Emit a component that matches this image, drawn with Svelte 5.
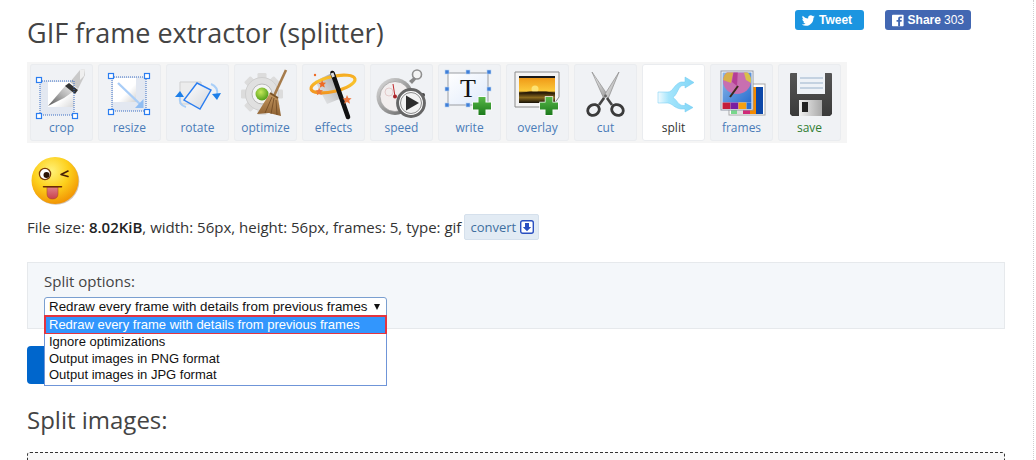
<script>
  const tools = [
    { id: 'crop' }, { id: 'resize' }, { id: 'rotate' }, { id: 'optimize' },
    { id: 'effects' }, { id: 'speed' }, { id: 'write' }, { id: 'overlay' },
    { id: 'cut' }, { id: 'split', cls: 'active' }, { id: 'frames' }, { id: 'save', cls: 'green' }
  ];
  const options = [
    'Redraw every frame with details from previous frames',
    'Ignore optimizations',
    'Output images in PNG format',
    'Output images in JPG format'
  ];
  const gearTeeth = [0, 45, 90, 135, 180, 225, 270, 315];
</script>

{#snippet handle(x, y)}
  <rect x={x - 2.5} y={y - 2.5} width="5" height="5" fill="#fff" stroke="#2a7df0" stroke-width="1.2" />
{/snippet}

{#snippet solidHandle(x, y)}
  <rect x={x - 2} y={y - 2} width="4" height="4" fill="#3f7fd8" stroke="#bcd4f2" stroke-width=".6" />
{/snippet}

{#snippet plus(x, y)}
  <path d="M{x - 3.5} {y - 9}h7v5.5h5.500v7h-5.500v5.500h-7v-5.500h-5.500v-7h5.500z" fill="url(#plusg)" stroke="#fff" stroke-width="1.4" paint-order="stroke" />
  <defs>
    <linearGradient id="plusg" x1="0" y1="0" x2="0" y2="1">
      <stop offset="0" stop-color="#58b848" /><stop offset="1" stop-color="#1c7a1c" />
    </linearGradient>
  </defs>
{/snippet}

{#snippet icon(id)}
  <svg class="ico" viewBox="0 0 64 50" width="64" height="50" aria-hidden="true">
    {#if id === 'crop'}
      <defs>
        <linearGradient id="paper1" x1="0" y1="0" x2="1" y2="1">
          <stop offset="0" stop-color="#fff" /><stop offset=".6" stop-color="#fff" /><stop offset="1" stop-color="#d8d8d8" />
        </linearGradient>
        <linearGradient id="blade" x1="0" y1="1" x2="1" y2="0">
          <stop offset="0" stop-color="#555" /><stop offset=".55" stop-color="#b5b5b5" /><stop offset="1" stop-color="#eee" />
        </linearGradient>
      </defs>
      <rect x="10" y="17" width="34" height="34" fill="#e3e8f1" />
      <rect x="18" y="18" width="26" height="25" fill="url(#paper1)" />
      <path d="M18 42L36 21L44 27L34 34Z" fill="url(#blade)" />
      <path d="M35 22L39 19L48 26L45 30Z" fill="#333" />
      <path d="M40 18L50 6L55 5L55 11L48 25Z" fill="#c9c9c9" />
      <path d="M50 6L55 5L54 12L50 16Z" fill="#efefef" />
      <rect x="10" y="17" width="34" height="34" fill="none" stroke="#3b6fc4" stroke-width="1" stroke-dasharray="1 1" />
      {@render handle(9, 16)}{@render handle(9, 52)}{@render handle(45, 52)}
    {:else if id === 'resize'}
      <defs>
        <linearGradient id="paper2" x1="0" y1="0" x2="1" y2="1">
          <stop offset="0" stop-color="#fff" /><stop offset=".6" stop-color="#fff" /><stop offset="1" stop-color="#d5d5d5" />
        </linearGradient>
      </defs>
      <rect x="14" y="13" width="34" height="34" fill="#e3e8f1" />
      <rect x="15" y="14" width="23" height="24" fill="url(#paper2)" />
      <path d="M20 19L44 42" stroke="#a9cdf7" stroke-width="2.4" />
      <path d="M45.500 35L45.500 44L37 44Z" fill="#8fbdf3" />
      <rect x="14" y="13" width="34" height="34" fill="none" stroke="#3b6fc4" stroke-width="1" stroke-dasharray="1 1" />
      {@render handle(13, 12)}{@render handle(49, 12)}{@render handle(13, 48)}{@render handle(49, 48)}
    {:else if id === 'rotate'}
      <defs>
        <linearGradient id="rotg" x1="0" y1="0" x2="1" y2="1">
          <stop offset="0" stop-color="#fff" /><stop offset="1" stop-color="#d3d6dc" />
        </linearGradient>
      </defs>
      <path d="M14 18H35V40H14Z" fill="#ececec" stroke="#cfcfcf" />
      <path d="M31 19L45 26L34 45L18 36Z" fill="url(#rotg)" stroke="#2a7df0" stroke-width="1.4" />
      <path d="M14 32C13 38 15 42 20 43" fill="none" stroke="#a9cff8" stroke-width="2" />
      <path d="M9 33L14 27L18 33Z" fill="#1e7fe8" />
      <path d="M45 20C50 22 52 26 51 31" fill="none" stroke="#a9cff8" stroke-width="2" />
      <path d="M46 30L51 36L55 29Z" fill="#1e7fe8" />
    {:else if id === 'optimize'}
      <defs>
        <radialGradient id="ball" cx=".4" cy=".35" r=".7">
          <stop offset="0" stop-color="#c6e85a" /><stop offset="1" stop-color="#4a9a14" />
        </radialGradient>
        <linearGradient id="brs" x1="0" y1="0" x2="0" y2="1">
          <stop offset="0" stop-color="#c79a62" /><stop offset="1" stop-color="#8f6233" />
        </linearGradient>
      </defs>
      {#each gearTeeth as a}
        <rect x="23.500" y="9" width="9" height="7" rx="1.200" fill="#dcdcdc" transform="rotate({a} 28 30)" />
      {/each}
      <circle cx="28" cy="30" r="16.500" fill="#e0e0e0" stroke="#cfcfcf" />
      <circle cx="28" cy="30" r="10" fill="#f4f4f4" stroke="#b9b9b9" />
      <circle cx="28" cy="30" r="6.500" fill="url(#ball)" />
      <path d="M52 6L39 34" stroke="#a67c4c" stroke-width="2.600" />
      <path d="M36 29L44 34L47 52L35 49L23 50Z" fill="url(#brs)" />
      <path d="M38 33L31 49M40 34L37 50M42 36L43 51" stroke="#6d4822" stroke-width=".8" />
      <path d="M36 29L44 34" stroke="#7a5428" stroke-width="2" />
    {:else if id === 'effects'}
      <defs>
        <linearGradient id="ring" x1="0" y1="1" x2="1" y2="0">
          <stop offset="0" stop-color="#f08a1d" /><stop offset=".6" stop-color="#f9c32b" /><stop offset="1" stop-color="#f4a11e" />
        </linearGradient>
        <linearGradient id="fan" x1="1" y1="0" x2="0" y2="1">
          <stop offset="0" stop-color="#777" stop-opacity=".8" /><stop offset="1" stop-color="#ccc" stop-opacity=".2" />
        </linearGradient>
      </defs>
      <path d="M30 9L13 17L25 40L40 34Z" fill="url(#fan)" />
      <ellipse cx="31" cy="20" rx="22.500" ry="7.500" transform="rotate(-13 31 20)" fill="none" stroke="url(#ring)" stroke-width="3.200" />
      <path d="M30.500 9L46 53" stroke="#111" stroke-width="4.600" stroke-linecap="round" />
      <path d="M30 9L31.500 13" stroke="#ddd" stroke-width="3" />
      <path d="M20 16l1.200 2.600 2.800.2-2 2 .8 2.800-2.600-1.400-2.400 1.500.6-2.900-2-1.900 2.800-.3z" fill="#ee6a24" />
      <path d="M17 23.500l1.200 2.600 2.800.2-2 2 .8 2.800-2.600-1.400-2.400 1.500.6-2.900-2-1.900 2.800-.3z" fill="#ee7a36" />
      <path d="M45 31l1.400 3 3.200.3-2.400 2.200.8 3.200-3-1.600-2.800 1.700.7-3.300-2.300-2.100 3.200-.3z" fill="#ee7a42" />
      <circle cx="13" cy="11" r="1.200" fill="#ee6a24" />
    {:else if id === 'speed'}
      <defs>
        <linearGradient id="wat" x1="0" y1="0" x2="1" y2="1">
          <stop offset="0" stop-color="#e2e2e2" /><stop offset="1" stop-color="#5b5b5b" />
        </linearGradient>
      </defs>
      <circle cx="47" cy="10.500" r="4.500" fill="#f4f4f4" stroke="#8f8f8f" stroke-width="1.600" />
      <path d="M39 17L44 13L46 15.500L42 20Z" fill="#888" />
      <circle cx="25" cy="32.500" r="18.500" fill="url(#wat)" />
      <circle cx="25" cy="32.500" r="15" fill="#f2eeee" stroke="#999" stroke-width=".7" />
      <circle cx="19" cy="28" r="4" fill="none" stroke="#dcbcbc" stroke-width=".7" />
      <path d="M25 32.500L23 20" stroke="#c0262a" stroke-width="1" />
      <circle cx="25" cy="32.500" r="2" fill="#a8262a" />
      <circle cx="53" cy="31" r="2" fill="#444" />
      <circle cx="41" cy="39" r="13.400" fill="#fff" stroke="#666" stroke-width="3" />
      <circle cx="41" cy="39" r="10.500" fill="#f2f2f2" stroke="#8a8a8a" stroke-width="1" />
      <path d="M36 31.500L49 39L36 46.500Z" fill="#2c2c2c" />
    {:else if id === 'write'}
      <defs>
        <linearGradient id="wrg" x1="0" y1="0" x2="1" y2="1">
          <stop offset="0" stop-color="#fff" /><stop offset="1" stop-color="#dfeafb" />
        </linearGradient>
      </defs>
      <rect x="10" y="9" width="40" height="32" fill="url(#wrg)" stroke="#9a9da3" stroke-width="1" />
      <text x="30" y="33" class="t-glyph" text-anchor="middle">T</text>
      {@render solidHandle(9, 8)}{@render solidHandle(30, 8)}{@render solidHandle(51, 8)}
      {@render solidHandle(9, 25)}{@render solidHandle(51, 25)}
      {@render solidHandle(9, 41)}{@render solidHandle(30, 41)}
      {@render plus(44, 42)}
    {:else if id === 'overlay'}
      <defs>
        <linearGradient id="sunset" x1="0" y1="0" x2="0" y2="1">
          <stop offset="0" stop-color="#f09a18" /><stop offset=".52" stop-color="#fbc93a" /><stop offset=".6" stop-color="#2a1c08" /><stop offset=".78" stop-color="#8a6a1e" /><stop offset="1" stop-color="#151005" />
        </linearGradient>
      </defs>
      <path d="M9 8H53V33L46 43H9Z" fill="#f4f4f4" stroke="#8c8c8c" stroke-width="1" />
      <rect x="13" y="12" width="36" height="27" fill="#1a1a1a" />
      <rect x="13" y="14" width="36" height="25" fill="url(#sunset)" />
      <circle cx="29" cy="25" r="3.500" fill="#fde272" />
      <path d="M13 29L24 27.500H40L49 29" fill="#2a1c08" />
      {@render plus(43, 42)}
    {:else if id === 'cut'}
      <defs>
        <linearGradient id="bl1" x1="0" y1="0" x2="1" y2="1">
          <stop offset="0" stop-color="#f7f7f7" /><stop offset="1" stop-color="#9a9a9a" />
        </linearGradient>
      </defs>
      <path d="M18 8L33 30L30 35Z" fill="url(#bl1)" stroke="#8c8c8c" stroke-width=".7" />
      <path d="M45 8L31 30L34 35Z" fill="url(#bl1)" stroke="#8c8c8c" stroke-width=".7" />
      <circle cx="31.500" cy="32" r="1.400" fill="#666" />
      <path d="M33 34L38 41" stroke="#444" stroke-width="2.600" />
      <path d="M30 34L25 41" stroke="#444" stroke-width="2.600" />
      <ellipse cx="19.500" cy="46" rx="6" ry="5.200" transform="rotate(-30 19.500 46)" fill="none" stroke="#3b3b3b" stroke-width="2.800" />
      <ellipse cx="43.500" cy="46" rx="6" ry="5.200" transform="rotate(30 43.500 46)" fill="none" stroke="#3b3b3b" stroke-width="2.800" />
    {:else if id === 'split'}
      <defs>
        <linearGradient id="spl" x1="0" y1="0" x2="1" y2="0">
          <stop offset="0" stop-color="#f2fbff" /><stop offset=".3" stop-color="#a4e5fc" /><stop offset="1" stop-color="#82d6f7" />
        </linearGradient>
      </defs>
      <path d="M16 28H26C31 28 32 20 39 18H43V13L52 18.500L43 24V21.500H41C36 22 36 30 31 33.500C36 37 36 41 41 41.500H43V39L51 43.500L43 48V45H39C32 44 31 40 26 39H16Z" fill="url(#spl)" stroke="#6cc8f0" stroke-width=".5" />
    {:else if id === 'frames'}
      <defs>
        <linearGradient id="sky" x1="0" y1="0" x2="1" y2="1">
          <stop offset="0" stop-color="#8db9e8" /><stop offset="1" stop-color="#2a6fd0" />
        </linearGradient>
        <clipPath id="pic"><rect x="12.500" y="8.500" width="29" height="30" /></clipPath>
      </defs>
      <rect x="19" y="20" width="36" height="31" fill="#fff" stroke="#a8a8a8" />
      <rect x="40" y="23" width="6" height="27" fill="#f38a00" />
      <rect x="46" y="23" width="7" height="27" fill="#0c47a8" />
      <rect x="21" y="46" width="6" height="4" fill="#78d88c" />
      <rect x="27" y="46" width="6" height="4" fill="#e0e0e0" />
      <rect x="33" y="46" width="7" height="4" fill="#d02a78" />
      <rect x="11" y="7" width="32" height="39" fill="#fff" stroke="#9098a8" />
      <rect x="12.500" y="8.500" width="29" height="30" fill="url(#sky)" />
      <g clip-path="url(#pic)">
        <ellipse cx="27" cy="17" rx="14" ry="13" fill="#c86fb0" />
        <path d="M13 16C14 8 22 5 24 5L21 19Z" fill="#d8b04a" />
        <path d="M33 5C39 8 42 13 41 19L36 16Z" fill="#d8c04a" />
        <path d="M24 5L28 5L27 22L22 18Z" fill="#b53f96" />
      </g>
      <path d="M28 22L20 33" stroke="#3a2a1a" stroke-width="2" />
      <rect x="12.500" y="38.500" width="8" height="6.500" fill="#c41e3a" />
      <rect x="20.500" y="38.500" width="8" height="6.500" fill="#7a1fa0" />
      <rect x="28.500" y="38.500" width="8" height="6.500" fill="#f5a010" />
      <rect x="36.500" y="38.500" width="5" height="6.500" fill="#2a6fd0" />
    {:else if id === 'save'}
      <defs>
        <linearGradient id="dsk" x1="0" y1="0" x2="0" y2="1">
          <stop offset="0" stop-color="#555" /><stop offset="1" stop-color="#3a3a3a" />
        </linearGradient>
        <linearGradient id="shu" x1="0" y1="0" x2="1" y2="0">
          <stop offset="0" stop-color="#f0f0f0" /><stop offset="1" stop-color="#a9a9a9" />
        </linearGradient>
      </defs>
      <path d="M13 9H53Q54 9 54 10V50L52 52H14L12 50V10Q12 9 13 9Z" fill="url(#dsk)" />
      <rect x="19" y="9" width="28" height="21" fill="#eef2f7" />
      <path d="M22 14H45M22 19H45M22 24H45" stroke="#9ab2cb" stroke-width="1" />
      <rect x="21" y="36" width="23" height="16" fill="url(#shu)" />
      <rect x="24" y="38" width="6" height="10" fill="#222" />
    {/if}
  </svg>
{/snippet}

<div class="page">
  <header class="top">
    <h1>GIF frame extractor (splitter)</h1>
    <div class="social">
      <span class="sbtn tweet">
        <svg viewBox="0 0 24 24" width="13" height="13" aria-hidden="true"><path fill="#fff" d="M23.600 4.600c-.9.400-1.800.7-2.800.8 1-.6 1.800-1.600 2.100-2.700-.9.600-2 1-3.100 1.200C18.900 2.900 17.600 2.300 16.200 2.300c-2.700 0-4.900 2.200-4.900 4.900 0 .4 0 .8.100 1.100C7.400 8.100 3.700 6.100 1.300 3.100c-.4.700-.7 1.600-.7 2.500 0 1.700.9 3.200 2.200 4.100-.8 0-1.600-.2-2.200-.6v.1c0 2.400 1.700 4.400 3.900 4.800-.4.100-.8.200-1.300.2-.3 0-.6 0-.9-.1.600 2 2.400 3.400 4.600 3.400-1.700 1.300-3.800 2.100-6.100 2.100-.4 0-.8 0-1.200-.1 2.200 1.400 4.800 2.200 7.500 2.200 9.100 0 14-7.500 14-14v-.6c1-.7 1.800-1.600 2.500-2.500z" /></svg>
        <b>Tweet</b>
      </span>
      <span class="sbtn share">
        <svg viewBox="0 0 14 14" width="13" height="13" aria-hidden="true"><rect width="14" height="14" rx="1" fill="#fff" /><path fill="#4267b2" d="M9.700 14V8.600h1.800l.3-2.100H9.700V5.200c0-.6.200-1 1-1h1.200V2.300c-.2 0-.9-.1-1.700-.1-1.700 0-2.800 1-2.800 2.900v1.400H5.500v2.100h1.900V14z" /></svg>
        <b>Share</b> <span>303</span>
      </span>
    </div>
  </header>

  <nav class="tools">
    {#each tools as t}
      <div class="tool {t.cls ?? ''}">
        {@render icon(t.id)}
        <span>{t.id}</span>
      </div>
    {/each}
  </nav>

  <svg class="emoji" viewBox="0 0 56 56" width="56" height="56" aria-hidden="true">
    <defs>
      <radialGradient id="face" cx=".42" cy=".3" r=".75">
        <stop offset="0" stop-color="#fff27a" /><stop offset=".5" stop-color="#fdd01c" /><stop offset="1" stop-color="#f08c00" />
      </radialGradient>
      <linearGradient id="tongue" x1="0" y1="0" x2="0" y2="1">
        <stop offset="0" stop-color="#e08088" /><stop offset="1" stop-color="#c9404c" />
      </linearGradient>
    </defs>
    <circle cx="28.800" cy="28.300" r="23.500" fill="#a9927a" opacity=".55" />
    <circle cx="28" cy="27.500" r="23.500" fill="url(#face)" />
    <circle cx="18" cy="21" r="5.600" fill="#fff" stroke="#7a3a06" stroke-width="1.300" />
    <circle cx="19.500" cy="22" r="3" fill="#2a1204" />
    <path d="M41 18L34 21.500L41 23.500" fill="none" stroke="#4a2006" stroke-width="1.600" stroke-linecap="round" stroke-linejoin="round" />
    <path d="M20 34H31V41C31 44 29 46 25.500 46C22 46 20 44 20 41Z" fill="url(#tongue)" stroke="#b0501f" stroke-width=".6" />
    <path d="M16.500 33.700H34.500" stroke="#6a2a04" stroke-width="1.500" stroke-linecap="round" />
  </svg>

  <p class="info">
    <span>File size: <b>8.02KiB</b>, width: 56px, height: 56px, frames: 5, type: gif</span>
    <span class="convert">
      convert
      <svg viewBox="0 0 14 14" width="14" height="14" aria-hidden="true"><rect x=".7" y=".7" width="12.600" height="12.600" rx="2" fill="#fff" stroke="#2a4fc0" stroke-width="1.400" /><path d="M5 3H9V7H11.200L7 11.200L2.800 7H5Z" fill="#2a4fc0" /></svg>
    </span>
  </p>

  <section class="options">
    <div class="opt-label">Split options:</div>
    <div class="select-wrap">
      <div class="select">
        <span>{options[0]}</span>
        <i class="caret"></i>
      </div>
      <ul class="dropdown">
        {#each options as o, i}
          <li class:selected={i === 0}>{o}</li>
        {/each}
      </ul>
    </div>
  </section>

  <div class="submit"></div>

  <h2>Split images:</h2>
  <div class="frames"></div>
</div>

<style>
  :global(body) {
    margin: 0;
    background: #fff;
  }
  .page {
    box-sizing: border-box;
    width: 1034px;
    height: 460px;
    overflow: hidden;
    padding: 0 28px 0 27px;
    border-right: 1px dotted #cfcfcf;
    font-family: "Open Sans", sans-serif;
    color: #333;
  }
  .top {
    height: 62px;
    display: flex;
    justify-content: space-between;
    align-items: flex-start;
  }
  h1 {
    margin: 14px 0 0;
    font-size: 27px;
    line-height: 37px;
    font-weight: 400;
    color: #444;
  }
  .social {
    display: flex;
    gap: 21px;
    margin: 10px 34px 0 0;
  }
  .sbtn {
    box-sizing: border-box;
    height: 20px;
    display: flex;
    align-items: center;
    gap: 4px;
    border-radius: 3px;
    color: #fff;
    font: 12px/20px "Liberation Sans", sans-serif;
    padding: 0 7px;
  }
  .sbtn span {
    margin-left: -1px;
  }
  .tweet {
    width: 69px;
    background: #1b95e0;
  }
  .share {
    width: 86px;
    background: #4267b2;
  }
  .tools {
    display: flex;
    gap: 5px;
    width: 820px;
    box-sizing: border-box;
    padding: 2px 4px 2px 3px;
    background: #f5f5f5;
  }
  .tool {
    width: 63px;
    height: 77px;
    flex: none;
    display: flex;
    flex-direction: column;
    align-items: center;
    border-radius: 3px;
    background: #f0f2f5;
    box-shadow: inset 0 0 0 1px #eaecef;
    font-size: 12px;
    line-height: 16px;
    color: #4a7cb8;
  }
  .tool.active {
    background: #fff;
    color: #333;
  }
  .tool.green {
    color: #2f7d32;
  }
  .tool span {
    margin-top: 6px;
  }
  .ico {
    display: block;
    flex: none;
    overflow: visible;
  }
  .t-glyph {
    font-family: "Liberation Serif", serif;
    font-size: 26px;
    fill: #111;
  }
  .emoji {
    display: block;
    margin-top: 10px;
  }
  .info {
    margin: 5px 0 0;
    display: flex;
    align-items: center;
    height: 26px;
    font-size: 15px;
    color: #333;
  }
  .info b {
    font-weight: 600;
    color: #222;
  }
  .convert {
    box-sizing: border-box;
    width: 75px;
    height: 26px;
    margin-left: 3px;
    padding-left: 5px;
    display: flex;
    align-items: center;
    gap: 4px;
    border: 1px solid #d5e0ec;
    border-radius: 2px;
    background: #e2ebf4;
    color: #3f6f9f;
    font-size: 13px;
  }
  .options {
    box-sizing: border-box;
    margin-top: 22px;
    height: 67px;
    padding: 8px 16px 0;
    background: #f4f7fa;
    border: 1px solid #e6e9ec;
  }
  .opt-label {
    font-size: 15px;
    line-height: 20px;
    color: #444;
  }
  .select-wrap {
    position: relative;
    width: 343px;
    margin-top: 6px;
  }
  .select {
    box-sizing: border-box;
    height: 20px;
    display: flex;
    justify-content: space-between;
    align-items: center;
    padding: 0 6px 2px 4px;
    background: #fff;
    border: 1px solid #7a9fd0;
    border-radius: 3px 3px 0 0;
    font: 13.330px "Liberation Sans", sans-serif;
    color: #111;
  }
  .caret {
    width: 0;
    height: 0;
    margin-top: 2px;
    border-left: 3.500px solid transparent;
    border-right: 3.500px solid transparent;
    border-top: 6px solid #111;
  }
  .dropdown {
    position: absolute;
    z-index: 2;
    left: 0;
    top: 18px;
    width: 343px;
    box-sizing: border-box;
    margin: 0;
    padding: 0 0 1px;
    list-style: none;
    background: #fff;
    border: 1px solid #6f95d8;
    border-top: 0;
    font: 13px/16.500px "Liberation Sans", sans-serif;
    color: #111;
  }
  .dropdown li {
    padding-left: 4px;
  }
  .dropdown li.selected {
    box-sizing: border-box;
    height: 19px;
    margin: 0 -1px;
    padding-left: 3px;
    line-height: 16px;
    background: #3296fd;
    color: #fff;
    border: 2px solid #e4343f;
    border-width: 2px 2px 1.500px;
  }
  .submit {
    width: 200px;
    height: 38px;
    margin-top: 17px;
    border-radius: 4px;
    background: #0066cc;
  }
  h2 {
    margin: 18px 0 0;
    font-size: 24px;
    line-height: 36px;
    font-weight: 400;
    color: #444;
  }
  .frames {
    box-sizing: border-box;
    height: 60px;
    margin-top: 14px;
    border: 1px dashed #333;
    border-radius: 3px;
    background: #f8f8f8;
  }
</style>
